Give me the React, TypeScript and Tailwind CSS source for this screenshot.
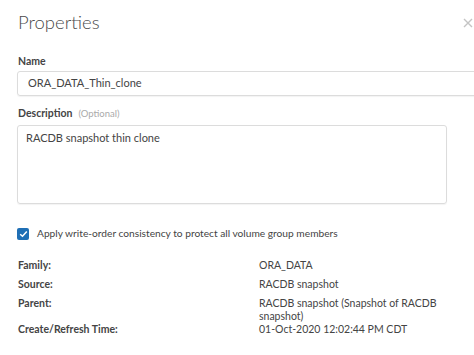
import React from "react";

const rows: { label: string; value: string }[] = [
  { label: "Family:", value: "ORA_DATA" },
  { label: "Source:", value: "RACDB snapshot" },
  { label: "Parent:", value: "RACDB snapshot (Snapshot of RACDB snapshot)" },
  { label: "Create/Refresh Time:", value: "01-Oct-2020 12:02:44 PM CDT" },
];

const App: React.FC = () => {
  return (
    <div
      className="w-[474px] h-[355px] overflow-hidden bg-white text-[#565656]"
      style={{ fontFamily: "Lato, 'Open Sans', sans-serif" }}
    >
      <div className="w-[520px] pl-[17px]">
        {/* header */}
        <div className="flex items-center h-[44px] w-[456px]">
          <h2 className="text-[18.5px] font-light text-[#4a4a4a] pl-[1px] pt-[1px]">Properties</h2>
          <svg className="ml-auto mt-[1px]" width="10" height="10" viewBox="0 0 10 10">
            <path d="M1 1L9 9M9 1L1 9" stroke="#c4c4c4" strokeWidth="1.4" />
          </svg>
        </div>

        {/* name */}
        <div className="mt-[10px] pl-[1px] text-[10.5px] font-bold text-[#444] leading-[14px]">Name</div>
        <div className="mt-[3px] h-[25px] w-[500px] border border-[#dcdcdc] rounded-[3px] shadow-[0_1px_1px_rgba(0,0,0,0.05)] flex items-center pl-[10px] text-[11px] text-[#444]">
          ORA_DATA_Thin_clone
        </div>

        {/* description */}
        <div className="mt-[10px] pl-[1px] text-[10.5px] leading-[14px] flex items-baseline gap-[6px]">
          <span className="font-bold text-[#444]">Description</span>
          <span className="text-[9.5px] text-[#aaa]">(Optional)</span>
        </div>
        <div className="mt-[4px] h-[79px] w-[430px] border border-[#dcdcdc] rounded-[3px] shadow-[0_1px_1px_rgba(0,0,0,0.05)] pl-[8px] pt-[5px] text-[11px] text-[#444] leading-[14px]">
          RACDB snapshot thin clone
        </div>

        {/* checkbox */}
        <div className="mt-[24px] flex items-center gap-[8px] h-[12px]">
          <div className="w-[12px] h-[12px] rounded-[2px] bg-[#1f6fb5] flex items-center justify-center">
            <svg width="9" height="8" viewBox="0 0 9 8">
              <path d="M1.2 4.2L3.5 6.3L7.8 1.5" stroke="white" strokeWidth="1.5" fill="none" />
            </svg>
          </div>
          <span className="text-[10.2px] text-[#444]">
            Apply write-order consistency to protect all volume group members
          </span>
        </div>

        {/* properties list */}
        <div className="mt-[19px] grid grid-cols-[242px_190px]">
          {rows.map((r) => (
            <React.Fragment key={r.label}>
              <div className="min-h-[19px] leading-[13px] text-[10.5px] font-bold text-[#444] pl-[1px]">
                {r.label}
              </div>
              <div className="min-h-[19px] leading-[13px] text-[10.5px] text-[#444]">{r.value}</div>
            </React.Fragment>
          ))}
        </div>
      </div>
    </div>
  );
};

export default App;
